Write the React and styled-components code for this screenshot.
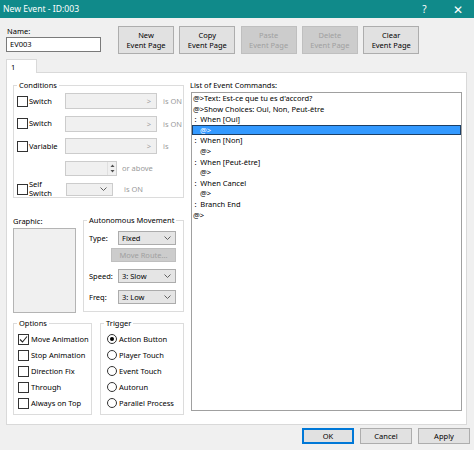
import React from 'react';
import styled, { createGlobalStyle } from 'styled-components';

const GlobalStyle = createGlobalStyle`
  html, body {
    margin: 0;
    padding: 0;
    background: #f0f0f0;
  }
  body {
    font-family: 'Noto Sans', 'Open Sans', sans-serif;
    font-size: 7.5px;
    color: #000;
  }
  * {
    box-sizing: border-box;
  }
`;

const Window = styled.div`
  width: 474px;
  height: 450px;
  background: #f0f0f0;
  display: flex;
  flex-direction: column;
  overflow: hidden;
  white-space: nowrap;
`;

const TitleBar = styled.div`
  height: 18px;
  flex: none;
  background: #108a8a;
  color: #fff;
  display: flex;
  align-items: center;
  padding-left: 3px;
  font-size: 8.6px;
  span:first-child {
    flex: 1;
  }
`;

const TitleButton = styled.span`
  width: 33px;
  text-align: center;
  font-size: ${({ $big }) => ($big ? '12px' : '10px')};
`;

const Header = styled.div`
  display: flex;
  align-items: flex-start;
  padding: 8px 0 0 6px;
  height: 36px;
  flex: none;
`;

const NameBlock = styled.div`
  width: 95px;
  display: flex;
  flex-direction: column;
  label {
    height: 11px;
    line-height: 10px;
    padding-left: 1px;
  }
`;

const NameInput = styled.div`
  height: 15px;
  background: #fff;
  border: 1px solid #7a7a7a;
  padding-left: 3px;
  line-height: 13px;
`;

const PageButtons = styled.div`
  display: flex;
  gap: 5.3px;
  margin-left: 17px;
`;

const Button = styled.div`
  width: ${({ $w }) => $w || 56}px;
  height: ${({ $h }) => $h || 28}px;
  flex: none;
  display: flex;
  align-items: center;
  justify-content: center;
  text-align: center;
  line-height: 10px;
  background: ${({ $disabled }) => ($disabled ? '#cccccc' : '#e1e1e1')};
  border: 1px solid
    ${({ $disabled, $default }) =>
      $default ? '#0078d7' : $disabled ? '#bfbfbf' : '#adadad'};
  color: ${({ $disabled }) => ($disabled ? '#a0a0a0' : '#000')};
  box-shadow: ${({ $default }) => ($default ? 'inset 0 0 0 1px #0078d7' : 'none')};
`;

const TabStrip = styled.div`
  display: flex;
  flex: none;
  margin: 5px 0 -1px 6px;
  position: relative;
  z-index: 1;
`;

const Tab = styled.div`
  width: 31px;
  height: 14px;
  background: #fff;
  border: 1px solid #d9d9d9;
  border-bottom: none;
  padding: 2px 0 0 4px;
  line-height: 10px;
`;

const Panel = styled.div`
  margin-left: 6px;
  width: 461px;
  height: 353px;
  flex: none;
  background: #fff;
  border: 1px solid #d9d9d9;
  display: flex;
  padding: 7px 0 0 6px;
`;

const LeftColumn = styled.div`
  width: 171px;
  display: flex;
  flex-direction: column;
`;

const RightColumn = styled.div`
  width: 272px;
  margin-left: 6px;
  display: flex;
  flex-direction: column;
`;

const Group = styled.fieldset`
  margin: 0;
  min-width: 0;
  border: 1px solid #dcdcdc;
  padding: ${({ $pt }) => $pt}px ${({ $pr }) => $pr || 0}px 0 ${({ $pl }) => $pl}px;
  width: ${({ $w }) => $w}px;
  height: ${({ $h }) => $h}px;
  display: flex;
  flex-direction: column;
  legend {
    padding: 0 2px;
    margin-left: ${({ $pl }) => 3 - $pl}px;
    line-height: 10px;
    height: 10px;
  }
`;

const CondRows = styled.div`
  display: flex;
  flex-direction: column;
  gap: 6.6px;
`;

const CondRow = styled.div`
  display: flex;
  align-items: center;
  height: ${({ $h }) => $h || 16}px;
`;

const CheckLabel = styled.label`
  width: 48px;
  display: flex;
  align-items: center;
  gap: 1px;
  line-height: 9px;
`;

const Box = styled.span`
  width: 11px;
  height: 11px;
  flex: none;
  border: 1px solid #333;
  background: #fff;
  display: inline-flex;
  align-items: center;
  justify-content: center;
`;

const DisabledField = styled.div`
  width: ${({ $w }) => $w}px;
  height: ${({ $h }) => $h || 16}px;
  margin-left: ${({ $ml }) => $ml || 0}px;
  background: #f0f0f0;
  border: 1px solid #cccccc;
  color: #a0a0a0;
  display: flex;
  align-items: center;
  justify-content: flex-end;
  padding-right: ${({ $pr }) => ($pr === undefined ? 5 : $pr)}px;
`;

const SpinButtons = styled.div`
  width: 9px;
  height: 13px;
  border-left: 1px solid #e0e0e0;
  display: flex;
  align-items: center;
  justify-content: center;
`;

const Hint = styled.span`
  color: #9a9a9a;
  margin-left: ${({ $ml }) => $ml}px;
`;

const MovementRow = styled.div`
  display: flex;
  align-items: center;
  height: 14px;
  margin-top: ${({ $mt }) => $mt || 0}px;
  justify-content: ${({ $end }) => ($end ? 'flex-end' : 'flex-start')};
  label {
    width: 29px;
  }
`;

const Select = styled.div`
  width: 58px;
  height: 14px;
  background: #e5e5e5;
  border: 1px solid #acacac;
  display: flex;
  align-items: center;
  justify-content: space-between;
  padding: 0 4px 0 3px;
  svg {
    flex: none;
  }
`;

const GraphicRow = styled.div`
  display: flex;
  margin-top: 17px;
  gap: 7px;
`;

const GraphicBlock = styled.div`
  width: 63px;
  display: flex;
  flex-direction: column;
  label {
    line-height: 10px;
    height: 13px;
    padding-top: 1px;
  }
`;

const GraphicBox = styled.div`
  height: 85px;
  background: #f0f0f0;
  border: 1px solid #b4b4b4;
`;

const BottomRow = styled.div`
  display: flex;
  gap: 8px;
  margin-top: 5px;
`;

const OptionRow = styled.label`
  display: flex;
  align-items: center;
  height: 16px;
  gap: 2px;
`;

const Radio = styled.span`
  width: 10px;
  height: 10px;
  flex: none;
  border-radius: 50%;
  border: 1px solid #333;
  background: #fff;
  display: inline-flex;
  align-items: center;
  justify-content: center;
  &::after {
    content: '';
    width: 4px;
    height: 4px;
    border-radius: 50%;
    background: ${({ $on }) => ($on ? '#000' : 'transparent')};
  }
`;

const ListLabel = styled.div`
  height: 12px;
  line-height: 10px;
`;

const CommandList = styled.div`
  height: 319px;
  margin-left: 1px;
  background: #fff;
  border: 1px solid #a0a0a0;
`;

const Command = styled.div`
  height: 10.6px;
  line-height: 10.6px;
  white-space: pre;
  padding-left: ${({ $indent }) => 1 + $indent * 7}px;
  background: ${({ $selected }) => ($selected ? '#3399ff' : 'transparent')};
  color: ${({ $selected }) => ($selected ? '#fff' : '#000')};
  outline: ${({ $selected }) => ($selected ? '1px solid #1c3f66' : 'none')};
  outline-offset: -1px;
`;

const Footer = styled.div`
  display: flex;
  justify-content: flex-end;
  gap: 6px;
  padding: 3px 4px 0 0;
`;

const Chevron = () => (
  <svg width="7" height="4" viewBox="0 0 7 4">
    <path d="M0.5 0.5 L3.5 3.5 L6.5 0.5" fill="none" stroke="#606060" strokeWidth="1" />
  </svg>
);

const SpinArrows = () => (
  <svg width="5" height="9" viewBox="0 0 5 9">
    <path d="M2.5 0.5 L4.5 3 L0.5 3 Z" fill="#505050" />
    <path d="M0.5 6 L4.5 6 L2.5 8.5 Z" fill="#505050" />
  </svg>
);

const Tick = () => (
  <svg width="9" height="9" viewBox="0 0 9 9">
    <path d="M1 4.5 L3.5 7 L8 1.5" fill="none" stroke="#222" strokeWidth="1.1" />
  </svg>
);

const commands = [
  { text: '@>Text: Est-ce que tu es d\'accord?', indent: 0 },
  { text: '@>Show Choices: Oui, Non, Peut-être', indent: 0 },
  { text: ':  When [Oui]', indent: 0.2 },
  { text: '@>', indent: 1, selected: true },
  { text: ':  When [Non]', indent: 0.2 },
  { text: '@>', indent: 1 },
  { text: ':  When [Peut-être]', indent: 0.2 },
  { text: '@>', indent: 1 },
  { text: ':  When Cancel', indent: 0.2 },
  { text: '@>', indent: 1 },
  { text: ':  Branch End', indent: 0.2 },
  { text: '@>', indent: 0 },
];

const options = [
  ['Move Animation', true],
  ['Stop Animation', false],
  ['Direction Fix', false],
  ['Through', false],
  ['Always on Top', false],
];

const triggers = ['Action Button', 'Player Touch', 'Event Touch', 'Autorun', 'Parallel Process'];

export default function App() {
  return (
    <Window>
      <GlobalStyle />
      <TitleBar>
        <span>New Event - ID:003</span>
        <TitleButton>?</TitleButton>
        <TitleButton $big>✕</TitleButton>
      </TitleBar>

      <Header>
        <NameBlock>
          <label>Name:</label>
          <NameInput>EV003</NameInput>
        </NameBlock>
        <PageButtons>
          <Button>New<br />Event Page</Button>
          <Button>Copy<br />Event Page</Button>
          <Button $disabled>Paste<br />Event Page</Button>
          <Button $disabled>Delete<br />Event Page</Button>
          <Button>Clear<br />Event Page</Button>
        </PageButtons>
      </Header>

      <TabStrip>
        <Tab>1</Tab>
      </TabStrip>

      <Panel>
        <LeftColumn>
          <Group $w={171} $h={118} $pt={3} $pl={3}>
            <legend>Conditions</legend>
            <CondRows>
              <CondRow>
                <CheckLabel><Box />Switch</CheckLabel>
                <DisabledField $w={92}>&gt;</DisabledField>
                <Hint $ml={6}>is ON</Hint>
              </CondRow>
              <CondRow>
                <CheckLabel><Box />Switch</CheckLabel>
                <DisabledField $w={92}>&gt;</DisabledField>
                <Hint $ml={6}>is ON</Hint>
              </CondRow>
              <CondRow>
                <CheckLabel><Box />Variable</CheckLabel>
                <DisabledField $w={92}>&gt;</DisabledField>
                <Hint $ml={6}>is</Hint>
              </CondRow>
              <CondRow $h={15}>
                <CheckLabel />
                <DisabledField $w={52} $h={15} $pr={0}>
                  <SpinButtons><SpinArrows /></SpinButtons>
                </DisabledField>
                <Hint $ml={5}>or above</Hint>
              </CondRow>
              <CondRow $h={14}>
                <CheckLabel><Box />Self<br />Switch</CheckLabel>
                <DisabledField $w={47} $h={13} $ml={1}>
                  <Chevron />
                </DisabledField>
                <Hint $ml={11}>is ON</Hint>
              </CondRow>
            </CondRows>
          </Group>

          <GraphicRow>
            <GraphicBlock>
              <label>Graphic:</label>
              <GraphicBox />
            </GraphicBlock>
            <Group $w={101} $h={97} $pt={6} $pr={7} $pl={5}>
              <legend>Autonomous Movement</legend>
              <MovementRow>
                <label>Type:</label>
                <Select>Fixed<Chevron /></Select>
              </MovementRow>
              <MovementRow $mt={3} $end>
                <Button $disabled $w={65} $h={14}>Move Route...</Button>
              </MovementRow>
              <MovementRow $mt={7}>
                <label>Speed:</label>
                <Select>3: Slow<Chevron /></Select>
              </MovementRow>
              <MovementRow $mt={7}>
                <label>Freq:</label>
                <Select>3: Low<Chevron /></Select>
              </MovementRow>
            </Group>
          </GraphicRow>

          <BottomRow>
            <Group $w={79} $h={97} $pt={3} $pl={4}>
              <legend>Options</legend>
              {options.map(([label, on]) => (
                <OptionRow key={label}>
                  <Box>{on && <Tick />}</Box>
                  {label}
                </OptionRow>
              ))}
            </Group>
            <Group $w={84} $h={97} $pt={3} $pl={6}>
              <legend>Trigger</legend>
              {triggers.map((label, i) => (
                <OptionRow key={label}>
                  <Radio $on={i === 0} />
                  {label}
                </OptionRow>
              ))}
            </Group>
          </BottomRow>
        </LeftColumn>

        <RightColumn>
          <ListLabel>List of Event Commands:</ListLabel>
          <CommandList>
            {commands.map((c, i) => (
              <Command key={i} $indent={c.indent} $selected={c.selected}>
                {c.text}
              </Command>
            ))}
          </CommandList>
        </RightColumn>
      </Panel>

      <Footer>
        <Button $default $w={52} $h={16}>OK</Button>
        <Button $w={52} $h={16}>Cancel</Button>
        <Button $w={52} $h={16}>Apply</Button>
      </Footer>
    </Window>
  );
}
